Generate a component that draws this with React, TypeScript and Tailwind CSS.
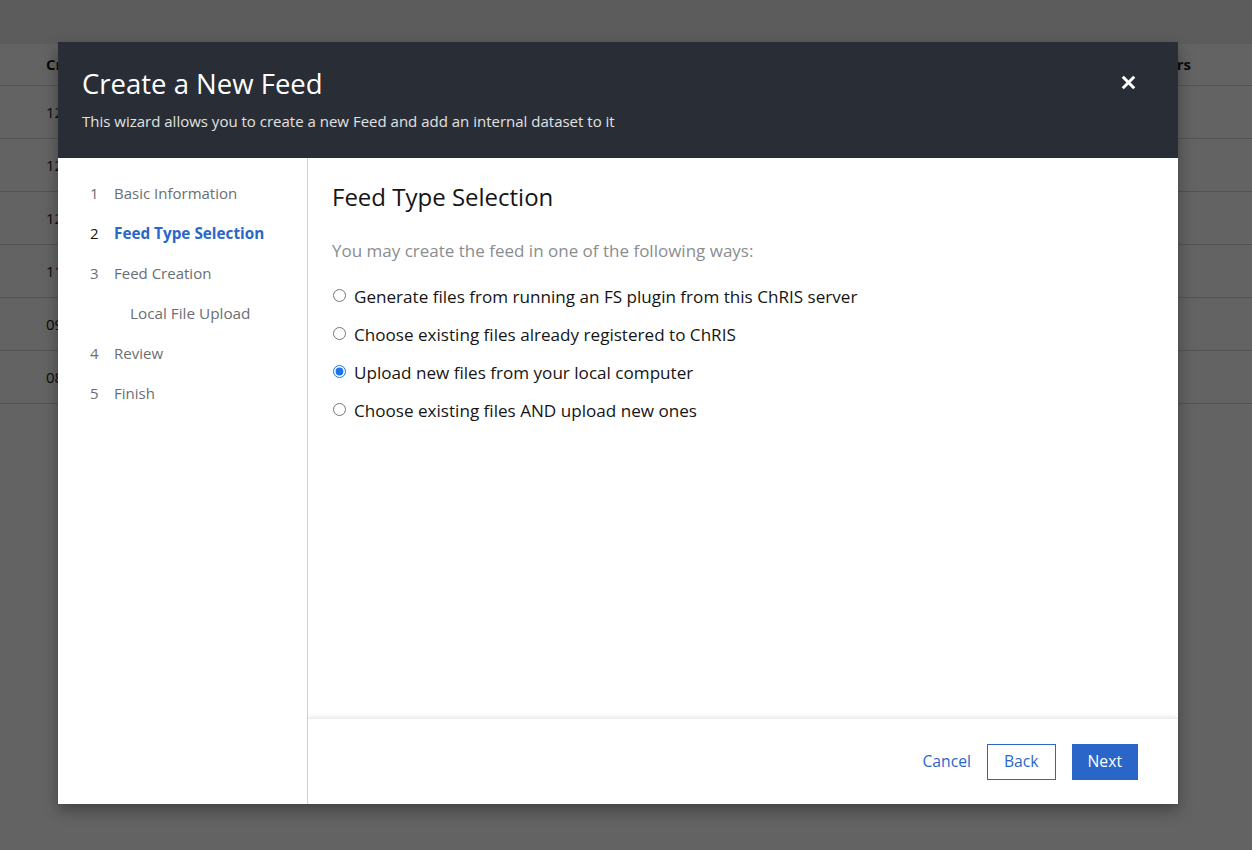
import React from 'react';

const ROWS = ['12/04/2021', '12/03/2021', '12/01/2021', '11/28/2021', '09/15/2021', '08/02/2021'];

const STEPS = [
  { n: '1', label: 'Basic Information' },
  { n: '2', label: 'Feed Type Selection', active: true },
  { n: '3', label: 'Feed Creation' },
  { n: '', label: 'Local File Upload', sub: true },
  { n: '4', label: 'Review' },
  { n: '5', label: 'Finish' },
];

const OPTIONS = [
  'Generate files from running an FS plugin from this ChRIS server',
  'Choose existing files already registered to ChRIS',
  'Upload new files from your local computer',
  'Choose existing files AND upload new ones',
];

export default function App() {
  return (
    <div className="relative w-full h-[850px] overflow-hidden bg-white font-['Open_Sans','Lato',sans-serif] text-[#151515]">
      {/* page behind the modal */}
      <div className="h-[44px] bg-[#ededed]" />
      <div className="flex flex-col">
        <div className="h-[42px] flex items-center justify-between pl-[46px] pr-[61px] border-b border-[#d2d2d2] text-[15px] font-bold">
          <span>Created</span>
          <span>Creators</span>
        </div>
        {ROWS.map((r) => (
          <div key={r} className="h-[53px] flex items-center pl-[46px] border-b border-[#d2d2d2] text-[15px]">
            {r}
          </div>
        ))}
      </div>

      {/* backdrop */}
      <div className="absolute inset-0 bg-[rgba(3,3,3,0.62)]" />

      {/* modal */}
      <div className="absolute left-[58px] top-[42px] w-[1120px] h-[762px] bg-white flex flex-col shadow-[0_6px_14px_rgba(0,0,0,0.35)]">
        <div className="h-[116px] bg-[#292e36] flex justify-between pl-6 pr-[42px] pt-[22px]">
          <div>
            <h1 className="text-[27.5px] leading-[40px] text-white">Create a New Feed</h1>
            <p className="mt-[6px] text-[15px] leading-[22px] text-[#e2e2e2]">
              This wizard allows you to create a new Feed and add an internal dataset to it
            </p>
          </div>
          <button className="mt-[10px] w-[16px] h-[16px] flex items-center justify-center">
            <svg width="15" height="15" viewBox="0 0 16 16">
              <path d="M3 3 L13 13 M13 3 L3 13" stroke="#ffffff" strokeWidth="3.2" strokeLinecap="square" />
            </svg>
          </button>
        </div>

        <div className="flex flex-1 min-h-0">
          <nav className="w-[250px] border-r border-[#d2d2d2] pt-[15px] pl-8 flex flex-col">
            {STEPS.map((s) => (
              <div key={s.label} className="h-10 flex items-center text-[15px]">
                <span className={`w-6 ${s.active ? 'text-[#151515]' : 'text-[#6a6e73]'}`}>{s.n}</span>
                <span
                  className={
                    s.active
                      ? 'font-bold text-[15.3px] text-[#2b66c9]'
                      : s.sub
                      ? 'pl-4 text-[15.3px] text-[#6a6e73]'
                      : 'text-[#6a6e73]'
                  }
                >
                  {s.label}
                </span>
              </div>
            ))}
          </nav>

          <div className="flex-1 flex flex-col min-w-0">
            <div className="flex-1 pl-6 pt-[23px]">
              <h2 className="text-[24px] leading-[32px] text-[#151515]">Feed Type Selection</h2>
              <p className="mt-[26px] text-[17px] leading-[24px] text-[#8a8d90]">
                You may create the feed in one of the following ways:
              </p>
              <div className="mt-[15px] flex flex-col">
                {OPTIONS.map((o, i) => (
                  <label key={o} className="h-[38px] flex items-center gap-2 text-[17.1px] text-[#151515]">
                    <input
                      type="radio"
                      name="feedType"
                      defaultChecked={i === 2}
                      className="w-[13px] h-[13px] ml-px -mt-[3px] accent-[#1a73e8]"
                    />
                    <span>{o}</span>
                  </label>
                ))}
              </div>
            </div>

            <div className="h-[86px] flex items-center justify-end pr-10 shadow-[0_-3px_4px_-1px_rgba(0,0,0,0.08)] border-t border-[#ececec]">
              <button className="px-4 text-[15.7px] text-[#2b66c9]">Cancel</button>
              <button className="h-9 px-4 text-[15.7px] text-[#2b66c9] border border-[#2b66c9]">Back</button>
              <button className="ml-4 h-9 px-4 text-[15.7px] text-white bg-[#2a66c8]">Next</button>
            </div>
          </div>
        </div>
      </div>
    </div>
  );
}
